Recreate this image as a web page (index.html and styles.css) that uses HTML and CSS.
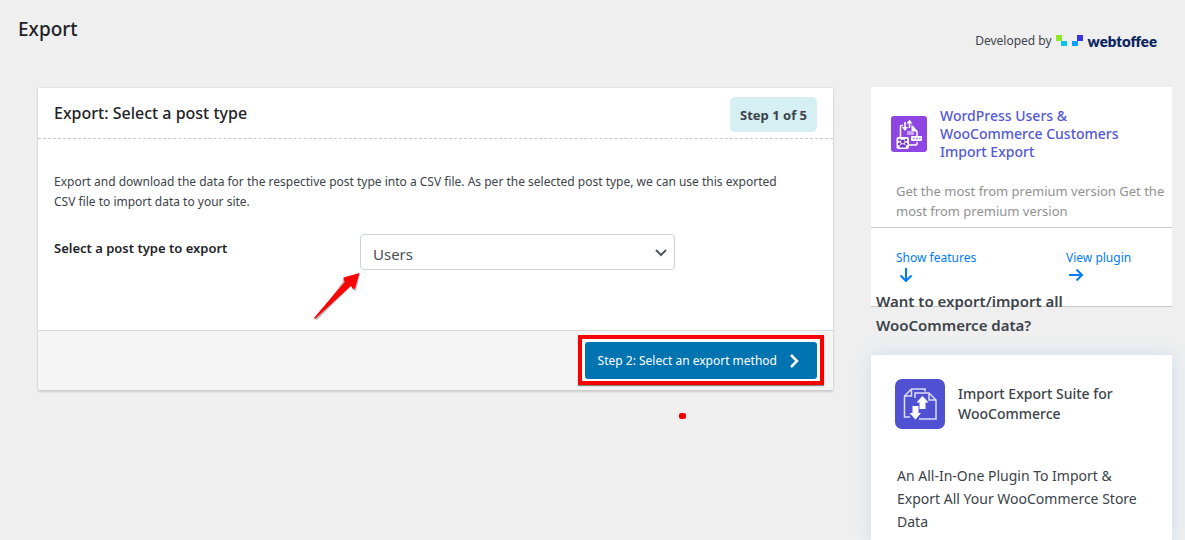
FILE: index.html
```html
<!DOCTYPE html>
<html lang="en">
<head>
<meta charset="utf-8">
<meta name="viewport" content="width=device-width, initial-scale=1">
<title>Export</title>
<link rel="stylesheet" href="styles.css">
</head>
<body>
<div class="page">
  <header class="topbar">
    <h1 class="page-title">Export</h1>
    <p class="credit">Developed by
      <a class="brand" href="#">
        <svg class="brand-mark" viewBox="0 0 28 12" width="28" height="12" aria-hidden="true">
          <rect x="0" y="0" width="6" height="6" fill="#8fe52d"/>
          <rect x="5" y="6" width="6" height="5" fill="#00c5f0"/>
          <rect x="16" y="6" width="6" height="5" fill="#0aa2ff"/>
          <rect x="21" y="0" width="6" height="6" fill="#3a35e0"/>
        </svg>
        <span class="brand-name">webtoffee</span>
      </a>
    </p>
  </header>

  <div class="columns">
    <main class="main">
      <form class="panel">
        <div class="panel-head">
          <h2 class="panel-title">Export: Select a post type</h2>
          <span class="step-badge">Step 1 of 5</span>
        </div>
        <div class="panel-body">
          <p class="intro">Export and download the data for the respective post type into a CSV file. As per the selected post type, we can use this exported CSV file to import data to your site.</p>
          <div class="field">
            <label class="field-label" for="post-type">Select a post type to export</label>
            <div class="select-wrap">
              <select class="select" id="post-type">
                <option>Users</option>
              </select>
              <svg class="chevron" viewBox="0 0 12 8" width="12" height="8" aria-hidden="true"><path d="M1 1l5 5 5-5" fill="none" stroke="#50575e" stroke-width="2"/></svg>
              <svg class="pointer" viewBox="0 0 50 50" width="50" height="50" aria-hidden="true"><path d="M2 47L29 11 30 9 47 2 43 19 40 18 38 14 4 48Z" fill="#777" opacity=".5"/><path d="M1 46L32 9.500 30.500 8.500 30.500 5.500 46.500 1 42 16.500 40 17 38 14 2 47Z" fill="#f80606"/></svg>
            </div>
          </div>
        </div>
        <div class="panel-foot">
          <span class="highlight">
            <button class="next" type="button">Step 2: Select an export method
              <svg viewBox="0 0 10 14" width="10" height="14" aria-hidden="true"><path d="M2 1l6 6-6 6" fill="none" stroke="#fff" stroke-width="2.500"/></svg>
            </button>
          </span>
        </div>
        <span class="dot"></span>
      </form>
    </main>

    <aside class="side">
      <section class="promo">
        <div class="promo-head">
          <svg class="promo-icon" viewBox="0 0 36 36" width="36" height="36" aria-hidden="true">
            <rect width="36" height="36" rx="3" fill="#8e45e2"/>
            <path d="M9.500 21V10.500q0-1 1-1H12M21.500 10.500l4.500 5V20M26 26v2q0 1-1 1H18" fill="none" stroke="#fff" stroke-width="1.500"/>
            <path d="M20.500 8.500l6 7h-6z" fill="#fff"/>
            <path d="M14 6v7M18.500 12V5" stroke="#fff" stroke-width="1.500"/>
            <path d="M11 11h6L14 15zM15.500 7.500h6L18.500 3.500z" fill="#fff"/>
            <rect x="16" y="15" width="7" height="4" fill="#c9a5f1"/>
            <rect x="20" y="20" width="11" height="5" rx="1" fill="#fff"/>
            <path d="M22 22.500h2M25 22.500h2M28 22.500h1.500" stroke="#b88bee" stroke-width="1.500"/>
            <rect x="5.500" y="21" width="12.500" height="12" rx="2" fill="#fff"/>
            <g fill="#6f35c4"><circle cx="8.500" cy="24" r="1.300"/><circle cx="15" cy="24" r="1.300"/><circle cx="11.750" cy="25.500" r="1.900"/><path d="M8.500 31.500q0-3.200 3.250-3.200t3.250 3.200zM6.800 29q0-2.700 2-2.700l1 1.500-1.500 1.700zM16.700 29q0-2.700-2-2.700l-1 1.500 1.500 1.700z"/></g>
          </svg>
          <h3 class="promo-title">WordPress Users &amp;<br>WooCommerce Customers<br>Import Export</h3>
        </div>
        <p class="promo-text">Get the most from premium version Get the<br>most from premium version</p>
        <div class="promo-links">
          <a class="promo-link" href="#">Show features
            <svg class="arrow" viewBox="0 0 18 14" width="18" height="14" aria-hidden="true"><path d="M10 0v13M4.500 7.500L10 13l5.500-5.500" fill="none" stroke="#007bff" stroke-width="2"/></svg>
          </a>
          <a class="promo-link" href="#">View plugin
            <svg class="arrow" viewBox="0 0 18 14" width="18" height="14" aria-hidden="true"><path d="M3 7h13M10.500 1.500L16 7l-5.500 5.500" fill="none" stroke="#007bff" stroke-width="2"/></svg>
          </a>
        </div>
      </section>

      <h2 class="side-heading">Want to export/import all<br>WooCommerce data?</h2>

      <section class="suite">
        <div class="suite-head">
          <svg class="suite-icon" viewBox="0 0 50 50" width="50" height="50" aria-hidden="true">
            <rect width="50" height="50" rx="7" fill="#4f51d2"/>
            <g fill="none" stroke="#dcdcf8" stroke-width="1.500">
              <path d="M15 38H9.500V17l7-7H30v2.500M9.500 17h7v-7"/>
              <path d="M20 19v-5h14l7 7v19H24M34 14v7h7"/>
            </g>
            <path d="M27.500 17l6 6.500H30.500V30h-6v-6.500h-3zM17.500 27h6v7H26l-5.500 6.500L14.500 34h3z" fill="#fff"/>
          </svg>
          <h3 class="suite-title">Import Export Suite for<br>WooCommerce</h3>
        </div>
        <p class="suite-text">An All-In-One Plugin To Import &amp;<br>Export All Your WooCommerce Store<br>Data</p>
      </section>
    </aside>
  </div>
</div>
</body>
</html>
```

FILE: styles.css
```css
* { box-sizing: border-box; }

body {
  margin: 0;
  background: #efefef;
  color: #3c434a;
  font: 12px/20px "Noto Sans", "Open Sans", sans-serif;
}

h1, h2, h3, p { margin: 0; }
a { text-decoration: none; }
svg { display: block; }

.page {
  display: flex;
  flex-direction: column;
  min-height: 100vh;
}

.topbar {
  display: flex;
  justify-content: space-between;
  align-items: flex-start;
  padding: 16px 28px 0 18px;
  height: 87px;
}

.page-title {
  color: #1d2327;
  font-size: 19px;
  font-weight: 500;
  line-height: 26px;
}

.credit {
  display: flex;
  align-items: center;
  gap: 4px;
  padding-top: 15px;
}

.brand {
  display: flex;
  align-items: center;
  gap: 4px;
  color: #0b2660;
}

.brand-name {
  font: 800 15px/20px Lato, sans-serif;
}

.columns {
  display: grid;
  grid-template-columns: minmax(0, 1fr) 301px;
  gap: 38px;
  flex: 1;
  padding: 0 13px 0 38px;
}

.main { padding-top: 1px; }

.panel {
  position: relative;
  background: #fff;
  box-shadow: 0 2px 2px #ccc, 0 0 2px #ccc;
}

.panel-head {
  display: flex;
  align-items: flex-start;
  justify-content: space-between;
  padding: 9px 16px 6px;
  border-bottom: 1px dashed #c8c8c8;
}

.panel-title {
  color: #1d2327;
  font-size: 16px;
  font-weight: 500;
  line-height: 32px;
}

.step-badge {
  padding: 8px 10px 7px;
  border-radius: 5px;
  background: #d6eff3;
  font-size: 13px;
  font-weight: 700;
}

.panel-body { padding: 33px 16px 60px; }

.intro { max-width: 745px; }

.field {
  display: grid;
  grid-template-columns: 306px 315px;
  padding-top: 22px;
}

.field-label {
  color: #1d2327;
  font-size: 13px;
  font-weight: 600;
  padding-top: 4px;
}

.select-wrap { position: relative; }

.select {
  display: block;
  width: 100%;
  height: 36px;
  padding: 4px 32px 0 12px;
  border: 1px solid #ccd3da;
  border-radius: 4px;
  background: #fff;
  color: #495057;
  font: inherit;
  font-size: 15px;
  appearance: none;
}

.chevron {
  position: absolute;
  top: 15px;
  right: 8px;
  pointer-events: none;
}

.pointer {
  position: absolute;
  top: 38px;
  left: -47px;
}

.panel-foot {
  display: flex;
  justify-content: flex-end;
  padding: 4px 9px 5px;
  border-top: 1px solid #d8d8d8;
  background: #f5f5f5;
}

.highlight {
  padding: 3px 3px 2px;
  border: 4px solid #f80000;
  background: #fff;
  box-shadow: 0 1px 1px #888;
}

.next {
  display: flex;
  align-items: center;
  gap: 12px;
  height: 37px;
  padding: 0 18px 0 13px;
  border: 0;
  border-radius: 3px;
  background: #0073b1;
  color: #fff;
  font: inherit;
}

.dot {
  position: absolute;
  top: 325px;
  left: 641px;
  width: 7px;
  height: 6px;
  border-radius: 2px;
  background: #f00000;
}

.side {
  display: flex;
  flex-direction: column;
  white-space: nowrap;
}

.promo {
  background: #fff;
  border-bottom: 1px solid #c8c8c8;
}

.promo-head {
  display: flex;
  align-items: center;
  gap: 13px;
  padding: 20px 20px 0;
}

.promo-title {
  color: #5358d4;
  font-size: 14px;
  font-weight: 500;
  line-height: 18px;
}

.promo-text {
  padding: 20px 0 6px 25px;
  border-bottom: 1px solid #c8c8c8;
  color: #919191;
  font-size: 13px;
}

.promo-links {
  display: grid;
  grid-template-columns: 170px 1fr;
  padding: 20px 0 24px 25px;
}

.promo-link { color: #007bff; }

.side-heading {
  position: relative;
  margin-top: -18px;
  padding: 0 5px 18px;
  color: #3c434a;
  font-size: 15px;
  font-weight: 600;
  line-height: 24px;
}

.suite {
  flex: 1;
  padding: 24px 24px 6px;
  background: #fff;
  box-shadow: 0 0 18px #cfdcf0;
}

.suite-head {
  display: flex;
  align-items: center;
  gap: 13px;
}

.suite-title {
  font-size: 14px;
  font-weight: 500;
  line-height: 20px;
}

.suite-text {
  padding: 35px 2px 0;
  font-size: 14px;
  line-height: 23px;
}
```
